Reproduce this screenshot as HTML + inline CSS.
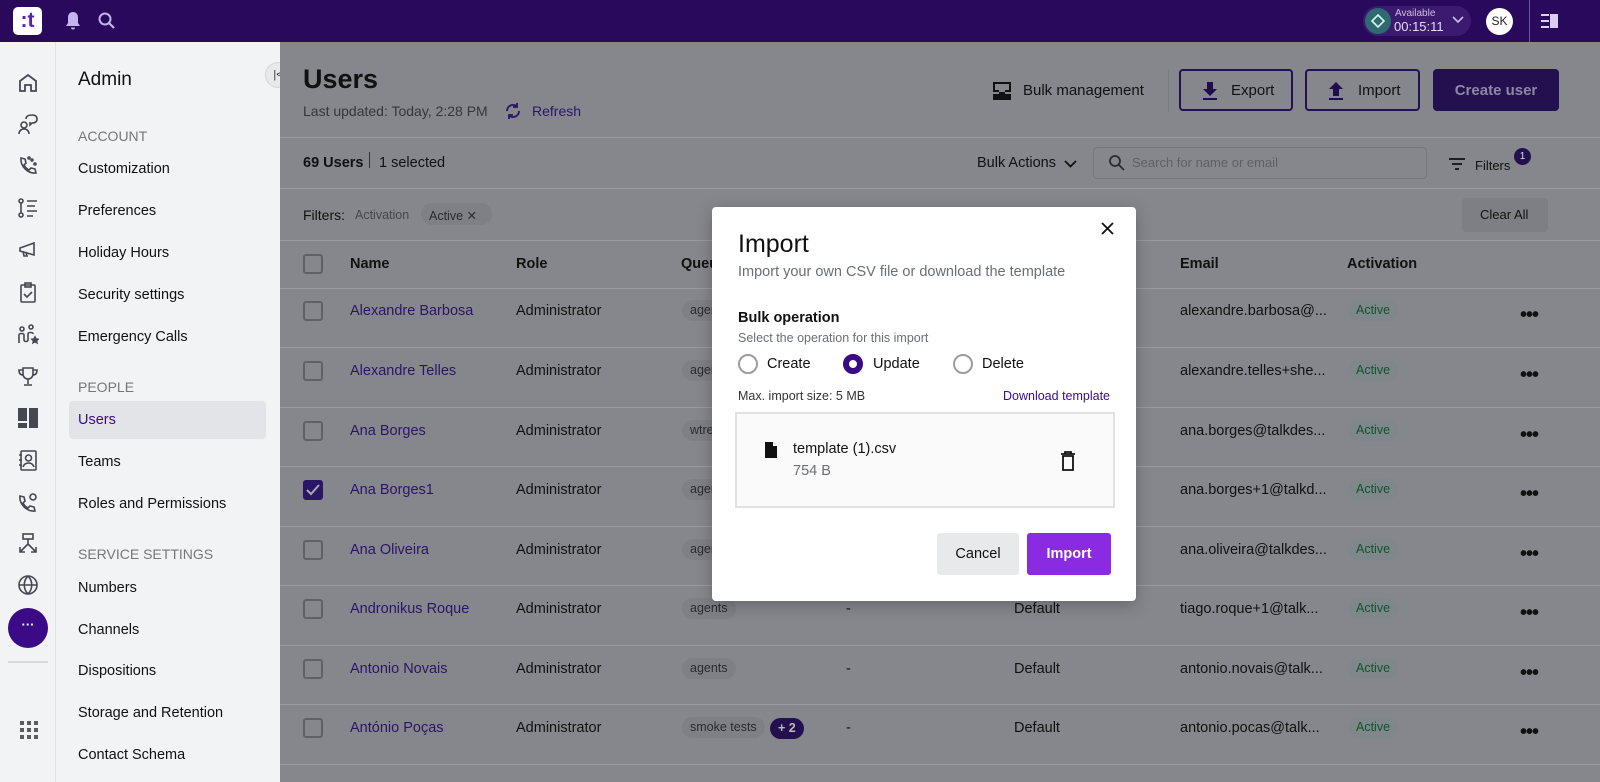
<!DOCTYPE html>
<html><head><meta charset="utf-8"><style>
*{box-sizing:border-box;margin:0;padding:0}
body{width:1600px;height:782px;overflow:hidden;font-family:"Liberation Sans",sans-serif;background:#86878d;position:relative;color:#111}
.abs{position:absolute}
.top{left:0;top:0;width:1600px;height:42px;background:#29095c}
.rail{left:0;top:42px;width:56px;height:740px;background:#f2f3f5;border-right:1px solid #e2e3e6}
.nav{left:56px;top:42px;width:224px;height:740px;background:#f2f3f5}
.nav div{position:absolute;left:22px;font-size:14.5px;color:#111}
.nav .sec{color:#75777d;font-size:14px}
.main{left:280px;top:42px;width:1320px;height:740px;background:#86878d}
.hl{position:absolute;left:0;width:1320px;height:1px;background:#9a9ba1}
.t{position:absolute;font-size:14.5px;white-space:nowrap}
.cb{position:absolute;width:20px;height:20px;border:2px solid #606167;border-radius:3px;left:23px}
.lnk{color:#2b1566}
.tag{position:absolute;height:21px;border-radius:11px;background:#7f8086;color:#2a2b30;font-size:12.5px;padding:3px 8px}
.act{position:absolute;left:1068px;height:21px;border-radius:11px;background:#7f878a;color:#12542e;font-size:12.5px;padding:3px 8px}
.dots{position:absolute;left:1240px;font-size:20px;font-weight:bold;letter-spacing:-1px}
.btn{position:absolute;height:42px;border:2px solid #23104e;border-radius:4px;font-size:15px;padding:11px 0 0 0}
.modal{left:712px;top:207px;width:424px;height:394px;background:#fff;border-radius:4px;box-shadow:0 4px 16px rgba(0,0,0,.25)}
.modal .t{font-size:14.5px}
.radio{position:absolute;width:20px;height:20px;border:2px solid #9a9ca1;border-radius:50%}
svg{position:absolute}
</style></head><body>
<div class="abs top">
 <div class="abs" style="left:13px;top:7px;width:29px;height:28px;background:#fff;border-radius:5px;color:#5b21b6;font-weight:bold;font-size:21px;text-align:center;line-height:28px">:t</div>
 <svg style="left:64px;top:11px" width="18" height="20" viewBox="0 0 18 20"><path d="M9 1c-3 0-5 2.3-5 5.5V12L2 15h14l-2-3V6.5C14 3.3 12 1 9 1z M7 16.5a2 2 0 004 0z" fill="#c4b3ec"/></svg>
 <svg style="left:97px;top:11px" width="20" height="20" viewBox="0 0 20 20"><circle cx="8" cy="8" r="5.5" stroke="#c4b3ec" stroke-width="2" fill="none"/><path d="M12 12l5 5" stroke="#c4b3ec" stroke-width="2.2"/></svg>
 <div class="abs" style="left:1363px;top:6px;width:108px;height:30px;border-radius:15px;background:#3c1a70"></div>
 <div class="abs" style="left:1365px;top:8px;width:26px;height:26px;border-radius:50%;background:#2e6a70"></div>
 <svg style="left:1370px;top:13px" width="16" height="16" viewBox="0 0 16 16"><path d="M8 2l6 6-6 6-6-6z" stroke="#cfe" stroke-width="1.6" fill="none"/></svg>
 <div class="abs" style="left:1395px;top:8px;font-size:10px;color:#c9bfe0">Available</div>
 <div class="abs" style="left:1394px;top:19px;font-size:13px;color:#e4dcf3">00:15:11</div>
 <svg style="left:1452px;top:16px" width="12" height="8" viewBox="0 0 12 8"><path d="M1 1l5 5 5-5" stroke="#c9bfe0" stroke-width="1.6" fill="none"/></svg>
 <div class="abs" style="left:1486px;top:8px;width:27px;height:27px;border-radius:50%;background:#fff;font-size:12px;text-align:center;line-height:27px;color:#222">SK</div>
 <div class="abs" style="left:1529px;top:0;width:1px;height:42px;background:#6a55a0"></div>
 <div class="abs" style="left:1541px;top:14px;width:8px;height:14px;border-top:2px solid #d9cff0;border-bottom:2px solid #d9cff0"></div>
 <div class="abs" style="left:1541px;top:20px;width:8px;height:2px;background:#d9cff0"></div>
 <div class="abs" style="left:1550px;top:14px;width:8px;height:14px;background:#d9cff0"></div>
</div>
<div class="abs rail">
 <svg style="left:17px;top:30px" width="22" height="22" viewBox="0 0 22 22" fill="none" stroke="#454850" stroke-width="1.8"><path d="M3 9l8-6 8 6v10h-5v-6H8v6H3z"/></svg>
 <svg style="left:17px;top:71px" width="22" height="22" viewBox="0 0 22 22" fill="none" stroke="#454850" stroke-width="1.6"><circle cx="7" cy="12" r="3"/><path d="M2 21c0-3 2-5 5-5s5 2 5 5M9 6c0-3 3-4 6-4s5 1 5 4-2 4-5 4l-2 2V9"/></svg>
 <svg style="left:17px;top:113px" width="22" height="22" viewBox="0 0 22 22" fill="none" stroke="#454850" stroke-width="1.6"><path d="M4 3l4 1 1 4-2 2c1 2 3 4 5 5l2-2 4 1 1 4c-8 1-16-7-15-15z"/><circle cx="15" cy="5" r="1"/><circle cx="18" cy="9" r="1"/><circle cx="12" cy="3" r="1"/></svg>
 <svg style="left:17px;top:155px" width="22" height="22" viewBox="0 0 22 22" fill="none" stroke="#454850" stroke-width="1.6"><circle cx="4" cy="4" r="2"/><circle cx="4" cy="18" r="2"/><path d="M4 6v10M10 4h10M10 9h8M10 14h10M10 19h6"/></svg>
 <svg style="left:17px;top:197px" width="22" height="22" viewBox="0 0 22 22" fill="none" stroke="#454850" stroke-width="1.6"><path d="M3 9l14-5v12L3 12zM6 12l1 5h3l-1-4"/></svg>
 <svg style="left:17px;top:239px" width="22" height="22" viewBox="0 0 22 22" fill="none" stroke="#454850" stroke-width="1.6"><rect x="4" y="4" width="14" height="17" rx="1"/><rect x="8" y="2" width="6" height="4"/><path d="M7 13l3 3 5-5"/></svg>
 <svg style="left:17px;top:281px" width="22" height="22" viewBox="0 0 22 22" fill="none" stroke="#454850" stroke-width="1.6"><circle cx="5" cy="6" r="2"/><circle cx="14" cy="4" r="2"/><path d="M2 20v-8c0-2 5-2 5 0v5c0 2 4 2 4 0v-6c0-2 5-2 5 0"/><path d="M18 14l1 2 2 .3-1.5 1.4.4 2-1.9-1-1.9 1 .4-2L15 16.3l2-.3z" fill="#454850"/></svg>
 <svg style="left:17px;top:323px" width="22" height="22" viewBox="0 0 22 22" fill="none" stroke="#454850" stroke-width="1.6"><path d="M6 3h10v6a5 5 0 01-10 0zM6 5H2c0 4 2 5 4 5M16 5h4c0 4-2 5-4 5M11 14v5M7 20h8"/></svg>
 <svg style="left:17px;top:365px" width="22" height="22" viewBox="0 0 22 22"><rect x="1" y="1" width="9" height="13" fill="#454850"/><rect x="1" y="16" width="9" height="5" fill="#454850"/><rect x="12" y="1" width="9" height="20" fill="#454850"/></svg>
 <svg style="left:17px;top:407px" width="22" height="22" viewBox="0 0 22 22" fill="none" stroke="#454850" stroke-width="1.6"><rect x="4" y="2" width="15" height="19" rx="1"/><circle cx="11.5" cy="9" r="3"/><path d="M6 18c1-3 3-4 5.5-4s4.5 1 5.5 4M2 6h3M2 11h3M2 16h3"/></svg>
 <svg style="left:17px;top:449px" width="22" height="22" viewBox="0 0 22 22" fill="none" stroke="#454850" stroke-width="1.6"><path d="M3 5l4 1 1 4-2 2c1 2 3 4 5 5l2-2 4 1 1 4c-8 1-16-7-15-15z"/><circle cx="16" cy="6" r="3"/></svg>
 <svg style="left:17px;top:491px" width="22" height="22" viewBox="0 0 22 22" fill="none" stroke="#454850" stroke-width="1.6"><rect x="6" y="1" width="10" height="5"/><path d="M11 6v5M11 11L3 19M3 14v5h5M11 11l8 8M19 14v5h-5"/></svg>
 <svg style="left:17px;top:532px" width="22" height="22" viewBox="0 0 22 22" fill="none" stroke="#454850" stroke-width="1.6"><circle cx="11" cy="11" r="9"/><path d="M2 11h18M11 2c-5 5-5 13 0 18M11 2c5 5 5 13 0 18"/></svg>
 <div class="abs" style="left:8px;top:566px;width:40px;height:40px;border-radius:50%;background:#3b0a86;color:#fff;text-align:center;font-size:13px;line-height:34px;font-weight:bold">···</div>
 <div class="abs" style="left:8px;top:619px;width:40px;height:2px;background:#d8d9dd"></div>
 <svg style="left:20px;top:679px" width="18" height="18" viewBox="0 0 18 18" fill="#5a5c62"><rect x="0" y="0" width="4" height="4"/><rect x="7" y="0" width="4" height="4"/><rect x="14" y="0" width="4" height="4"/><rect x="0" y="7" width="4" height="4"/><rect x="7" y="7" width="4" height="4"/><rect x="14" y="7" width="4" height="4"/><rect x="0" y="14" width="4" height="4"/><rect x="7" y="14" width="4" height="4"/><rect x="14" y="14" width="4" height="4"/></svg>
</div>
<div class="abs nav">
 <div style="top:27px;font-size:19px">Admin</div>
 <div class="abs" style="left:209px;top:20px;width:26px;height:26px;border-radius:50%;background:#e8e9ec;border:1px solid #d5d6da;font-size:11px;text-align:center;line-height:24px;color:#333">|&lt;</div>
 <div class="sec" style="top:86px">ACCOUNT</div>
 <div style="top:119px">Customization</div>
 <div style="top:161px">Preferences</div>
 <div style="top:203px">Holiday Hours</div>
 <div style="top:245px">Security settings</div>
 <div style="top:287px">Emergency Calls</div>
 <div class="sec" style="top:337px">PEOPLE</div>
 <div class="abs" style="left:13px;top:359px;width:197px;height:38px;background:#e3e4e8;border-radius:4px"></div>
 <div style="top:370px;color:#3b0a86">Users</div>
 <div style="top:412px">Teams</div>
 <div style="top:454px">Roles and Permissions</div>
 <div class="sec" style="top:504px">SERVICE SETTINGS</div>
 <div style="top:538px">Numbers</div>
 <div style="top:580px">Channels</div>
 <div style="top:621px">Dispositions</div>
 <div style="top:663px">Storage and Retention</div>
 <div style="top:705px">Contact Schema</div>
</div>
<div class="abs main">
 <div class="t" style="left:23px;top:22px;font-size:27px;font-weight:bold">Users</div>
 <div class="t" style="left:23px;top:61px;font-size:14px;color:#34363b">Last updated: Today, 2:28 PM</div>
 <svg style="left:224px;top:60px" width="18" height="18" viewBox="0 0 18 18" fill="none" stroke="#2b1566" stroke-width="1.8"><path d="M3 9a6 6 0 0110-4.5M15 9a6 6 0 01-10 4.5M13 1v4h-4M5 17v-4h4"/></svg>
 <div class="t lnk" style="left:252px;top:61px;font-size:14px">Refresh</div>
 <svg style="left:711px;top:38px" width="22" height="22" viewBox="0 0 22 22"><path d="M2 2h18v10H14v2H8v-2H2z M4 4v6h4v2h6v-2h4V4z" fill="#111"/><rect x="2" y="14" width="18" height="6" fill="#111"/></svg>
 <div class="t" style="left:743px;top:40px;font-size:15px">Bulk management</div>
 <div class="abs" style="left:888px;top:28px;width:1px;height:42px;background:#7a7b81"></div>
 <div class="btn" style="left:899px;top:27px;width:114px"><svg style="left:20px;top:10px" width="18" height="20" viewBox="0 0 18 20"><path d="M6 1h6v7h4l-7 7-7-7h4z M2 17h14v2H2z" fill="#1f0c4e"/></svg><span style="position:absolute;left:50px;top:11px">Export</span></div>
 <div class="btn" style="left:1025px;top:27px;width:115px"><svg style="left:20px;top:10px" width="18" height="20" viewBox="0 0 18 20"><path d="M6 15h6V8h4L9 1 2 8h4z M2 17h14v2H2z" fill="#1f0c4e"/></svg><span style="position:absolute;left:51px;top:11px">Import</span></div>
 <div class="btn" style="left:1153px;top:27px;width:126px;background:#23104e;color:#8f87a3;font-weight:bold;text-align:center;border-color:#23104e">Create user</div>
 <div class="hl" style="top:95px"></div>
 <div class="t" style="left:23px;top:113px;font-weight:bold">69 Users</div>
 <div class="abs" style="left:89px;top:110px;width:1px;height:16px;background:#333"></div>
 <div class="t" style="left:99px;top:113px">1 selected</div>
 <div class="t" style="left:697px;top:113px">Bulk Actions</div>
 <svg style="left:784px;top:118px" width="13" height="8" viewBox="0 0 13 8"><path d="M1 1l5.5 5.5L12 1" stroke="#111" stroke-width="1.8" fill="none"/></svg>
 <div class="abs" style="left:813px;top:105px;width:334px;height:32px;border:1.5px solid #75767c;border-radius:4px"></div>
 <svg style="left:828px;top:112px" width="18" height="18" viewBox="0 0 18 18"><circle cx="7" cy="7" r="5" stroke="#2a2b30" stroke-width="1.8" fill="none"/><path d="M11 11l5 5" stroke="#2a2b30" stroke-width="1.8"/></svg>
 <div class="t" style="left:852px;top:113px;font-size:13px;color:#5e6066">Search for name or email</div>
 <svg style="left:1168px;top:115px" width="18" height="14" viewBox="0 0 18 14"><path d="M1 2h16M4 7h10M7 12h4" stroke="#111" stroke-width="1.8"/></svg>
 <div class="t" style="left:1195px;top:116px;font-size:13px">Filters</div>
 <div class="abs" style="left:1234px;top:106px;width:17px;height:17px;border-radius:50%;background:#23104e;color:#ddd;font-size:10px;text-align:center;line-height:17px">1</div>
 <div class="hl" style="top:146px"></div>
 <div class="t" style="left:23px;top:165px;font-size:14px">Filters:</div>
 <div class="t" style="left:75px;top:166px;font-size:12.5px;color:#45474c">Activation</div>
 <div class="abs" style="left:141px;top:161px;width:71px;height:22px;border-radius:11px;background:#7f8086"></div>
 <div class="t" style="left:149px;top:166px;font-size:12.5px;color:#2a2b30">Active ✕</div>
 <div class="abs" style="left:1182px;top:156px;width:86px;height:34px;border-radius:4px;background:#7e7f85"></div>
 <div class="t" style="left:1200px;top:165px;font-size:13px">Clear All</div>
 <div class="hl" style="top:198px"></div>
 <div class="cb" style="top:212px"></div>
 <div class="t" style="left:70px;top:214px;font-weight:bold">Name</div>
 <div class="t" style="left:236px;top:214px;font-weight:bold">Role</div>
 <div class="t" style="left:401px;top:214px;font-weight:bold">Queues</div>
 <div class="t" style="left:900px;top:214px;font-weight:bold">Email</div>
 <div class="t" style="left:1067px;top:214px;font-weight:bold">Activation</div>
 <div class="hl" style="top:246px"></div>

 <div class="cb" style="top:259px"></div><div class="t lnk" style="left:70px;top:261px">Alexandre Barbosa</div><div class="t" style="left:236px;top:261px">Administrator</div><div class="tag" style="left:402px;top:258px">agents</div><div class="t" style="left:900px;top:261px">alexandre.barbosa@...</div><div class="act" style="top:258px">Active</div><div class="dots" style="top:262px">•••</div>
 <div class="hl" style="top:305px"></div>
 <div class="cb" style="top:319px"></div><div class="t lnk" style="left:70px;top:321px">Alexandre Telles</div><div class="t" style="left:236px;top:321px">Administrator</div><div class="tag" style="left:402px;top:318px">agents</div><div class="t" style="left:900px;top:321px">alexandre.telles+she...</div><div class="act" style="top:318px">Active</div><div class="dots" style="top:322px">•••</div>
 <div class="hl" style="top:365px"></div>
 <div class="cb" style="top:379px"></div><div class="t lnk" style="left:70px;top:381px">Ana Borges</div><div class="t" style="left:236px;top:381px">Administrator</div><div class="tag" style="left:402px;top:378px">wtre</div><div class="t" style="left:900px;top:381px">ana.borges@talkdes...</div><div class="act" style="top:378px">Active</div><div class="dots" style="top:382px">•••</div>
 <div class="hl" style="top:424px"></div>
 <div class="cb" style="top:438px;background:#2b1566;border-color:#2b1566"></div><svg style="left:26px;top:442px" width="14" height="12" viewBox="0 0 14 12"><path d="M1 6l4 4 8-9" stroke="#aaa" stroke-width="2" fill="none"/></svg><div class="t lnk" style="left:70px;top:440px">Ana Borges1</div><div class="t" style="left:236px;top:440px">Administrator</div><div class="tag" style="left:402px;top:437px">agents</div><div class="t" style="left:900px;top:440px">ana.borges+1@talkd...</div><div class="act" style="top:437px">Active</div><div class="dots" style="top:441px">•••</div>
 <div class="hl" style="top:484px"></div>
 <div class="cb" style="top:498px"></div><div class="t lnk" style="left:70px;top:500px">Ana Oliveira</div><div class="t" style="left:236px;top:500px">Administrator</div><div class="tag" style="left:402px;top:497px">agents</div><div class="t" style="left:900px;top:500px">ana.oliveira@talkdes...</div><div class="act" style="top:497px">Active</div><div class="dots" style="top:501px">•••</div>
 <div class="hl" style="top:543px"></div>
 <div class="cb" style="top:557px"></div><div class="t lnk" style="left:70px;top:559px">Andronikus Roque</div><div class="t" style="left:236px;top:559px">Administrator</div><div class="tag" style="left:402px;top:556px">agents</div><div class="t" style="left:566px;top:559px">-</div><div class="t" style="left:734px;top:559px">Default</div><div class="t" style="left:900px;top:559px">tiago.roque+1@talk...</div><div class="act" style="top:556px">Active</div><div class="dots" style="top:560px">•••</div>
 <div class="hl" style="top:603px"></div>
 <div class="cb" style="top:617px"></div><div class="t lnk" style="left:70px;top:619px">Antonio Novais</div><div class="t" style="left:236px;top:619px">Administrator</div><div class="tag" style="left:402px;top:616px">agents</div><div class="t" style="left:566px;top:619px">-</div><div class="t" style="left:734px;top:619px">Default</div><div class="t" style="left:900px;top:619px">antonio.novais@talk...</div><div class="act" style="top:616px">Active</div><div class="dots" style="top:620px">•••</div>
 <div class="hl" style="top:662px"></div>
 <div class="cb" style="top:676px"></div><div class="t lnk" style="left:70px;top:678px">António Poças</div><div class="t" style="left:236px;top:678px">Administrator</div><div class="tag" style="left:402px;top:675px">smoke tests</div><div class="tag" style="left:490px;top:676px;background:#23104e;color:#bbb;font-weight:bold">+ 2</div><div class="t" style="left:566px;top:678px">-</div><div class="t" style="left:734px;top:678px">Default</div><div class="t" style="left:900px;top:678px">antonio.pocas@talk...</div><div class="act" style="top:675px">Active</div><div class="dots" style="top:679px">•••</div>
 <div class="hl" style="top:722px"></div>
</div>

<div class="abs modal">
 <svg style="left:389px;top:15px" width="13" height="13" viewBox="0 0 13 13"><path d="M1 1l11 11M12 1L1 12" stroke="#111" stroke-width="1.8"/></svg>
 <div class="t" style="left:26px;top:23px;font-size:25px">Import</div>
 <div class="t" style="left:26px;top:57px;font-size:14.5px;color:#6b6e74">Import your own CSV file or download the template</div>
 <div class="t" style="left:26px;top:103px;font-weight:bold">Bulk operation</div>
 <div class="t" style="left:26px;top:124px;font-size:12.5px;color:#6b6e74">Select the operation for this import</div>
 <div class="radio" style="left:26px;top:147px"></div><div class="t" style="left:55px;top:149px">Create</div>
 <div class="radio" style="left:131px;top:147px;border:6px solid #3b0a86"></div><div class="t" style="left:161px;top:149px">Update</div>
 <div class="radio" style="left:241px;top:147px"></div><div class="t" style="left:270px;top:149px">Delete</div>
 <div class="t" style="left:26px;top:182px;font-size:12.5px;color:#333">Max. import size: 5 MB</div>
 <div class="t" style="left:291px;top:182px;font-size:12.5px;color:#3b0a86">Download template</div>
 <div class="abs" style="left:23px;top:205px;width:380px;height:96px;border:2px solid #dfe1e4;background:#fafafa"></div>
 <svg style="left:52px;top:234px" width="14" height="18" viewBox="0 0 14 18"><path d="M1 1h8l4 4v12H1z" fill="#111"/><path d="M9 1v4h4" fill="#fafafa"/></svg>
 <div class="t" style="left:81px;top:234px">template (1).csv</div>
 <div class="t" style="left:81px;top:256px;color:#6b6e74">754 B</div>
 <svg style="left:348px;top:244px" width="16" height="20" viewBox="0 0 16 20"><path d="M1 3h14M5 3V1h6v2M3 5h10v14H3z" stroke="#111" stroke-width="1.8" fill="none"/></svg>
 <div class="abs" style="left:225px;top:326px;width:82px;height:42px;border-radius:3px;background:#e8e9eb;font-size:14.5px;text-align:center;line-height:42px">Cancel</div>
 <div class="abs" style="left:315px;top:326px;width:84px;height:42px;border-radius:3px;background:#8a2be2;color:#fff;font-weight:bold;font-size:14.5px;text-align:center;line-height:42px">Import</div>
</div>
</body></html>
